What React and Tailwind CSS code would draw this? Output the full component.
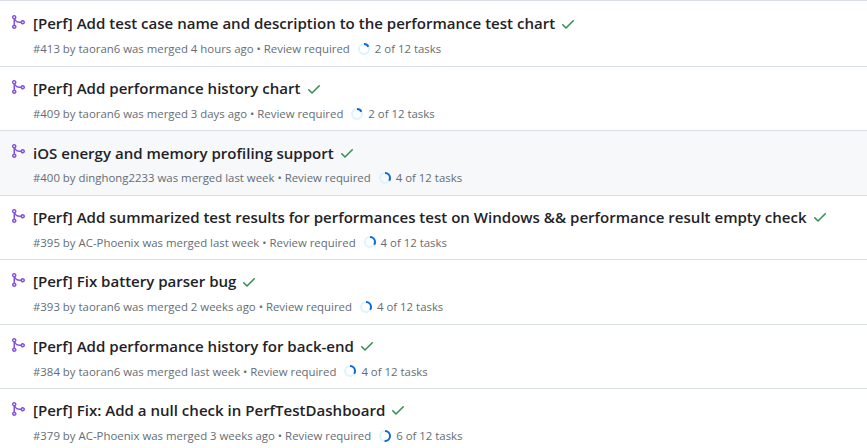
const rows = [
  { t: "[Perf] Add test case name and description to the performance test chart", n: "#413", u: "taoran6", w: "4 hours ago", d: 2 },
  { t: "[Perf] Add performance history chart", n: "#409", u: "taoran6", w: "3 days ago", d: 2 },
  { t: "iOS energy and memory profiling support", n: "#400", u: "dinghong2233", w: "last week", d: 4, hover: true },
  { t: "[Perf] Add summarized test results for performances test on Windows && performance result empty check", n: "#395", u: "AC-Phoenix", w: "last week", d: 4 },
  { t: "[Perf] Fix battery parser bug", n: "#393", u: "taoran6", w: "2 weeks ago", d: 4 },
  { t: "[Perf] Add performance history for back-end", n: "#384", u: "taoran6", w: "last week", d: 4 },
  { t: "[Perf] Fix: Add a null check in PerfTestDashboard", n: "#379", u: "AC-Phoenix", w: "3 weeks ago", d: 6 },
];

function Merge() {
  return (
    <svg width="16" height="16" viewBox="0 0 16 16" fill="#8250df" className="block">
      <path d="M5.45 5.154A4.25 4.25 0 0 0 9.25 7.5h1.378a2.251 2.251 0 1 1 0 1.5H9.25A5.734 5.734 0 0 1 5 7.123v3.505a2.25 2.25 0 1 1-1.5 0V5.372a2.25 2.25 0 1 1 1.95-.218ZM4.25 13.5a.75.75 0 1 0 0-1.5.75.75 0 0 0 0 1.5Zm8.5-4.5a.75.75 0 1 0 0-1.5.75.75 0 0 0 0 1.5ZM5 3.25a.75.75 0 1 0 0 .005V3.25Z" />
    </svg>
  );
}

function Check() {
  return (
    <svg width="16" height="16" viewBox="0 0 16 16" fill="#2f8f4e" className="block">
      <path d="M13.78 4.22a.75.75 0 0 1 0 1.06l-7.25 7.25a.75.75 0 0 1-1.06 0L2.22 9.28a.751.751 0 0 1 .018-1.042.751.751 0 0 1 1.042-.018L6 10.94l6.72-6.72a.75.75 0 0 1 1.06 0Z" />
    </svg>
  );
}

function Progress({ done }) {
  const c = 2 * Math.PI * 5;
  return (
    <svg width="12" height="12" viewBox="0 0 12 12" fill="none" className="block -rotate-90">
      <circle cx="6" cy="6" r="5" stroke="#ddf4ff" strokeWidth="2" />
      <circle cx="6" cy="6" r="5" stroke="#0969da" strokeWidth="2" strokeDasharray={`${(c * done) / 12} ${c}`} />
    </svg>
  );
}

export default function App() {
  return (
    <div className="w-[867px] h-[448px] overflow-hidden bg-white font-['Open_Sans','Noto_Sans',sans-serif]">
      {rows.map((r) => (
        <div key={r.n} className={`flex h-[64.4px] border-t border-[#d8dee4] pt-[7px] pl-[12px] first:h-[66px] first:pt-[8px] ${r.hover ? "bg-[#f6f8fa]" : ""}`}>
          <div className="pt-[5px] w-[21px] shrink-0 -ml-[2px] mr-[2px]"><Merge /></div>
          <div>
            <div className="flex items-center gap-[5px] h-[29px]">
              <span className="text-[15.05px] font-semibold text-[#1f2328] whitespace-nowrap">{r.t}</span>
              <Check />
            </div>
            <div className="flex items-center text-[11.4px] text-[#656d76] whitespace-nowrap mt-[2px]">
              <span>{r.n} by {r.u} was merged {r.w} • Review required</span>
              <span className="ml-[8px] mr-[5px]"><Progress done={r.d} /></span>
              <span>{r.d} of 12 tasks</span>
            </div>
          </div>
        </div>
      ))}
    </div>
  );
}
